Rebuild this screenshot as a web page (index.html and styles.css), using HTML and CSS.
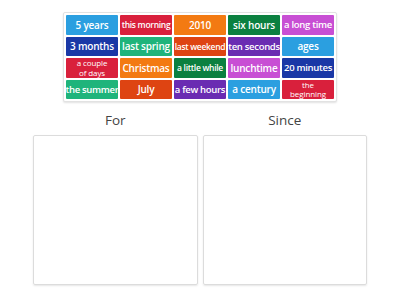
FILE: index.html
```html
<!DOCTYPE html>
<html lang="en">
<head>
  <meta charset="UTF-8" />
  <title>For and Since</title>
  <link rel="stylesheet" href="styles.css">
</head>
<body>
  <div class="page">
    <div class="tiles">
      <div class="tile c-sky">5 years</div>
      <div class="tile c-red tight">this morning</div>
      <div class="tile c-orange">2010</div>
      <div class="tile c-forest">six hours</div>
      <div class="tile c-pink fit">a long time</div>

      <div class="tile c-navy">3 months</div>
      <div class="tile c-teal">last spring</div>
      <div class="tile c-rust tight">last weekend</div>
      <div class="tile c-purple fit">ten seconds</div>
      <div class="tile c-sky">ages</div>

      <div class="tile c-red two">a couple<br>of days</div>
      <div class="tile c-orange">Christmas</div>
      <div class="tile c-forest tight">a little while</div>
      <div class="tile c-pink">lunchtime</div>
      <div class="tile c-navy fit">20 minutes</div>

      <div class="tile c-teal fit">the summer</div>
      <div class="tile c-rust">July</div>
      <div class="tile c-purple fit">a few hours</div>
      <div class="tile c-sky">a century</div>
      <div class="tile c-red two">the<br>beginning</div>
    </div>

    <div class="groups">
      <div class="group">
        <div class="group-title">For</div>
        <div class="drop-box"></div>
      </div>
      <div class="group">
        <div class="group-title">Since</div>
        <div class="drop-box"></div>
      </div>
    </div>
  </div>
</body>
</html>
```

FILE: styles.css
```css
* { margin: 0; padding: 0; box-sizing: border-box; }
body {
  font-family: "Open Sans", "Liberation Sans", sans-serif;
  background: #fff;
  width: 400px; height: 300px; overflow: hidden;
}
.page { padding-top: 12px; }

.tiles {
  width: 274px; margin: 0 auto;
  display: grid; grid-template-columns: repeat(5, 1fr); grid-auto-rows: 19.5px;
  gap: 2px; padding: 2px;
  border: 1px solid #e2e2e2; border-radius: 2px;
  box-shadow: 0 1px 2px rgba(0,0,0,0.12);
  background: #fff;
}
.tile {
  display: flex; align-items: center; justify-content: center; text-align: center;
  color: #fff; font-size: 10px; font-weight: 600; white-space: nowrap;
  border-radius: 1px; overflow: hidden; letter-spacing: -0.2px;
}
.tile.fit { font-size: 9.5px; letter-spacing: -0.3px; }
.tile.tight { font-size: 8.5px; letter-spacing: -0.3px; }
.tile.two { font-size: 8px; line-height: 9.5px; font-weight: 500; letter-spacing: -0.1px; }

.c-sky { background: #2b9fe0; }
.c-red { background: #d9203c; }
.c-orange { background: #f37a12; }
.c-forest { background: #0b8040; }
.c-pink { background: #c84fd4; }
.c-navy { background: #1a38a6; }
.c-teal { background: #1fb47b; }
.c-rust { background: #de4412; }
.c-purple { background: #6a2cb2; }

.groups {
  width: 334px; margin: 8px auto 0;
  display: flex; gap: 5px;
}
.group { flex: 1; }
.group-title {
  text-align: center; font-size: 13.5px; line-height: 20px; color: #444;
  margin-bottom: 5px;
}
.drop-box {
  height: 150px; border: 1px solid #dcdcdc; border-radius: 2px;
  box-shadow: 0 1px 2px rgba(0,0,0,0.1);
}
```
